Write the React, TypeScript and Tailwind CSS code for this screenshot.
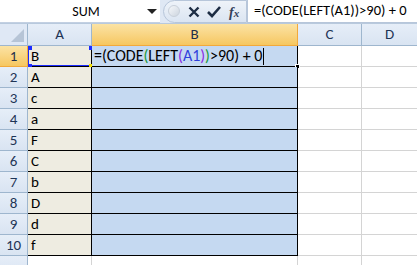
import React from "react";

const rows: [string, string][] = [
  ["1", "B"],
  ["2", "A"],
  ["3", "c"],
  ["4", "a"],
  ["5", "F"],
  ["6", "C"],
  ["7", "b"],
  ["8", "D"],
  ["9", "d"],
  ["10", "f"],
  ["", ""],
];

const font = { fontFamily: "Carlito, Calibri, 'Open Sans', 'Liberation Sans', sans-serif" };

function Formula() {
  return (
    <span className="whitespace-pre text-[16px]">
      <span className="text-black">=(CODE</span>
      <span className="text-[#1a9a3a]">(</span>
      <span className="text-black">LEFT</span>
      <span className="text-[#8a2be2]">(</span>
      <span className="text-[#2f3fdc]">A1</span>
      <span className="text-[#8a2be2]">)</span>
      <span className="text-[#1a9a3a]">)</span>
      <span className="text-black">{">90) + 0"}</span>
    </span>
  );
}

export default function App() {
  return (
    <div className="w-[417px] h-[265px] overflow-hidden bg-white flex flex-col" style={font}>
      {/* Formula bar */}
      <div className="h-[28px] flex flex-col bg-[#dfe8f4]">
        <div className="h-[23px] flex items-stretch">
          <div className="w-[160px] bg-white border-b border-[#c3d0e2] flex items-center relative">
            <span className="flex-1 text-center text-[14px] text-black pl-[12px]">SUM</span>
            <svg width="10" height="6" viewBox="0 0 10 6" className="absolute left-[147px] top-[9px]">
              <path d="M0 0 L10 0 L5 5 Z" fill="#222" />
            </svg>
          </div>
          <div className="w-[3px] bg-[#dfe8f4]" />
          <div className="w-[84px] relative flex items-center rounded-l-[12px] border border-[#b7c6da] bg-gradient-to-b from-[#eef3f9] to-[#dbe5f2]">
            <div className="absolute left-[4px] top-[4px] w-[12px] h-[12px] rounded-full bg-gradient-to-br from-[#f6f8fb] to-[#cdd5df] border border-[#c8d0da]" />
            <svg width="12" height="12" viewBox="0 0 12 12" className="absolute left-[24px] top-[5px]">
              <path d="M1.5 1.5 L10.5 10.5 M10.5 1.5 L1.5 10.5" stroke="#1d2d44" strokeWidth="2.4" />
            </svg>
            <svg width="14" height="12" viewBox="0 0 14 12" className="absolute left-[43px] top-[5px]">
              <path d="M1 6 L5 10 L13 1" stroke="#1d2d44" strokeWidth="2.6" fill="none" />
            </svg>
            <span className="absolute left-[65px] top-[1px] text-[14px] italic font-bold text-[#33405a]" style={{ fontFamily: "'Liberation Serif', serif" }}>
              f<span className="text-[11px]">x</span>
            </span>
          </div>
          <div className="flex-1 bg-white border-l border-b border-[#b7c6da] flex items-center pl-[6px] text-[14.5px] text-black">
            =(CODE(LEFT(A1))&gt;90) + 0
          </div>
        </div>
        <div className="flex-1 bg-[#d5e1ef] border-b border-[#b8c9dd]" />
      </div>

      {/* Header row */}
      <div className="h-[22px] flex text-[15px] text-[#1f3556]">
        <div className="w-[28px] relative border-r border-b border-[#9eb6ce] bg-[#dfe8f5]">
          <svg width="13" height="13" viewBox="0 0 13 13" className="absolute right-[3px] bottom-[3px]">
            <path d="M13 0 L13 13 L0 13 Z" fill="#b6c4d6" />
          </svg>
        </div>
        <div className="w-[64px] flex items-center justify-center border-r border-b border-[#9eb6ce] bg-gradient-to-b from-[#e6eef8] to-[#d9e4f2]">
          A
        </div>
        <div className="w-[206px] flex items-center justify-center border-r border-b border-[#f2a93b] bg-gradient-to-b from-[#fbe3a4] to-[#f6c75f] text-[#1f2f4a]">
          B
        </div>
        <div className="w-[64px] flex items-center justify-center border-r border-b border-[#9eb6ce] bg-gradient-to-b from-[#e6eef8] to-[#d9e4f2]">
          C
        </div>
        <div className="flex-1 flex items-center justify-center border-b border-[#9eb6ce] bg-gradient-to-b from-[#e6eef8] to-[#d9e4f2]">
          D
        </div>
      </div>

      {/* Rows */}
      {rows.map(([n, v], i) => {
        const selected = i === 0;
        const last = i === rows.length - 1;
        return (
          <div key={i} className="h-[21px] shrink-0 flex text-[15px]">
            <div
              className={
                selected
                  ? "w-[28px] flex items-center justify-center border-r border-b border-[#f2a93b] bg-gradient-to-b from-[#fbe3a4] to-[#f6c75f] text-[#1f2f4a]"
                  : "w-[28px] flex items-center justify-center border-r border-b border-[#9eb6ce] bg-gradient-to-b from-[#e6eef8] to-[#d9e4f2] text-[#1f3556]"
              }
            >
              {n}
            </div>
            <div
              className={
                last
                  ? "w-[64px] border-r border-[#d4d4d4] bg-white"
                  : "w-[64px] relative flex items-center pl-[3px] border-r border-b border-black bg-[#eeece1] text-black"
              }
            >
              {v}
              {selected && (
                <>
                  <div className="absolute left-0 top-0 w-[63px] h-[20px] border border-[#1c2bff] border-r-0 border-t-0" />
                  <div className="absolute left-0 top-0 w-[4px] h-[4px] bg-[#1c2bff]" />
                  <div className="absolute right-[-2px] top-0 w-[4px] h-[4px] bg-[#1c2bff]" />
                  <div className="absolute left-0 bottom-[-2px] w-[4px] h-[4px] bg-[#1c2bff]" />
                  <div className="absolute right-[-2px] bottom-[-2px] w-[4px] h-[4px] bg-[#f4e000]" />
                </>
              )}
            </div>
            <div
              className={
                last
                  ? "w-[206px] border-r border-[#d4d4d4] bg-white"
                  : "w-[206px] relative flex items-center pl-[2px] border-r border-b border-black bg-[#c5d9f1] text-black"
              }
            >
              {selected && (
                <>
                  <Formula />
                  <span className="ml-[1px] w-[1px] h-[17px] bg-black" />
                  <div className="absolute right-[-3px] bottom-[-3px] w-[5px] h-[5px] bg-black border border-white" />
                </>
              )}
            </div>
            <div className={last ? "w-[64px] border-r border-[#d4d4d4]" : "w-[64px] border-r border-b border-[#d4d4d4]"} />
            <div className={last ? "flex-1" : "flex-1 border-b border-[#d4d4d4]"} />
          </div>
        );
      })}
    </div>
  );
}
